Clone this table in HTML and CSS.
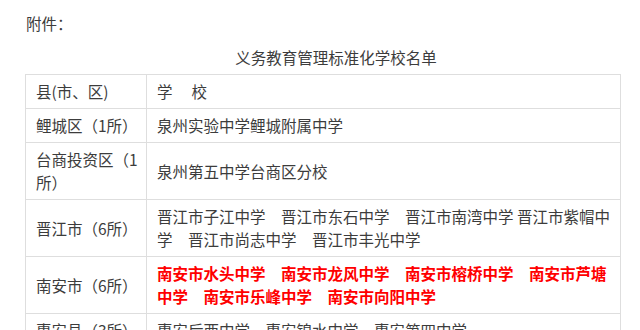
FILE: index.html
```html
<!DOCTYPE html>
<html lang="zh">
<head>
<meta charset="utf-8">
<title>义务教育管理标准化学校名单</title>
<link rel="stylesheet" href="styles.css">
</head>
<body>
<div class="page">
  <p class="attach">附件：</p>
  <p class="title">义务教育管理标准化学校名单</p>
  <table class="list">
    <colgroup><col class="c1"><col class="c2"></colgroup>
    <tr><td>县(市、区)</td><td>学　&nbsp;校</td></tr>
    <tr><td>鲤城区（1所）</td><td>泉州实验中学鲤城附属中学</td></tr>
    <tr><td>台商投资区（1所）</td><td>泉州第五中学台商区分校</td></tr>
    <tr><td>晋江市（6所）</td><td>晋江市子江中学　晋江市东石中学　晋江市南湾中学 晋江市紫帽中学　晋江市尚志中学　晋江市丰光中学</td></tr>
    <tr><td>南安市（6所）</td><td class="red">南安市水头中学　南安市龙风中学　南安市榕桥中学　南安市芦塘中学　南安市乐峰中学　南安市向阳中学</td></tr>
    <tr><td>惠安县（3所）</td><td>惠安后西中学　惠安锦水中学　惠安第四中学</td></tr>
  </table>
</div>
</body>
</html>
```
FILE: styles.css
```css
html, body {
  margin: 0;
  padding: 0;
  background: #fff;
}
body {
  font-family: "Noto Sans CJK SC", "Noto Sans", sans-serif;
  font-size: 15.5px;
  color: #3c3c3c;
  line-height: 23px;
  text-spacing-trim: space-all;
}
.page {
  padding: 12px 19px 0 25px;
  width: 596px;
}
.attach {
  margin: 0 0 11px 1px;
}
.title {
  margin: 0 0 5px 0;
  padding-left: 26px;
  text-align: center;
}
.list {
  width: 596px;
  border-collapse: collapse;
  table-layout: fixed;
}
.c1 { width: 121px; }
.list td {
  border: 1px solid #dedede;
  padding: 5px 10px;
  vertical-align: middle;
  word-break: break-all;
}
.list td:first-child {
  padding-right: 6px;
}
.red {
  color: #ff0000;
  font-weight: bold;
}
```
